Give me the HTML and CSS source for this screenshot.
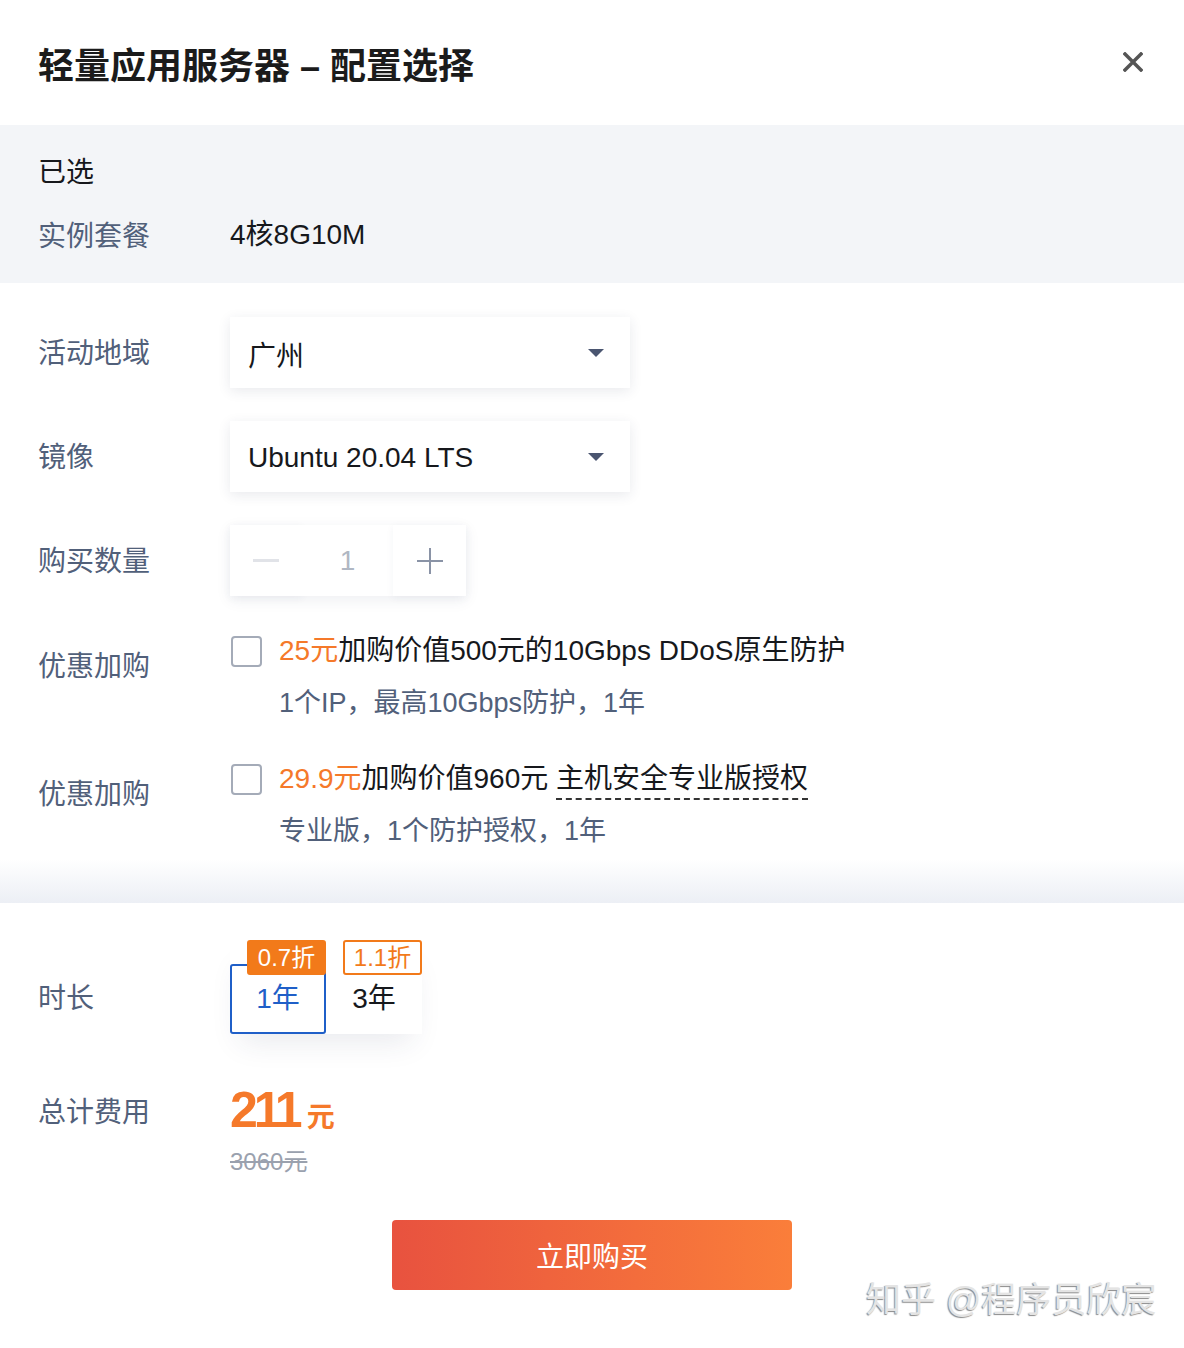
FILE: index.html
```html
<!DOCTYPE html>
<html lang="zh-CN">
<head>
    <meta charset="utf-8">
    <title>轻量应用服务器 - 配置选择</title>
    <meta name="viewport" content="width=device-width, initial-scale=1">
    <link rel="stylesheet" href="styles.css">
</head>
<body>

<div class="dialog">
    <div class="head">
        <h2 class="title">轻量应用服务器 – 配置选择</h2>
        <span class="close">
            <svg width="20" height="20" viewBox="0 0 20 20"><path d="M2 2 L18 18 M18 2 L2 18" stroke="#555" stroke-width="3.5" stroke-linecap="square"/></svg>
        </span>
    </div>

    <!-- 已选 -->
    <div class="picked">
        <div class="picked-title">已选</div>
        <div class="picked-row">
            <span class="label">实例套餐</span>
            <span class="value">4核8G10M</span>
        </div>
    </div>

    <div class="form">
        <div class="field">
            <div class="label">活动地域</div>
            <div class="select"><span>广州</span><i class="caret"></i></div>
        </div>
        <div class="field">
            <div class="label">镜像</div>
            <div class="select"><span>Ubuntu 20.04 LTS</span><i class="caret"></i></div>
        </div>
        <div class="field">
            <div class="label">购买数量</div>
            <div class="stepper">
                <div class="step minus"><i class="bar"></i></div>
                <div class="step num">1</div>
                <div class="step plus"><i class="bar"></i><i class="bar v"></i></div>
            </div>
        </div>
        <div class="field addon">
            <div class="label">优惠加购</div>
            <div class="addon-body">
                <div class="addon-main">
                    <span class="checkbox"></span>
                    <span><em class="price">25元</em>加购价值500元的10Gbps DDoS原生防护</span>
                </div>
                <div class="addon-sub">1个IP，最高10Gbps防护，1年</div>
            </div>
        </div>
        <div class="field addon">
            <div class="label">优惠加购</div>
            <div class="addon-body">
                <div class="addon-main">
                    <span class="checkbox"></span>
                    <span><em class="price">29.9元</em>加购价值960元 <span class="dashed">主机安全专业版授权</span></span>
                </div>
                <div class="addon-sub">专业版，1个防护授权，1年</div>
            </div>
        </div>
    </div>

    <div class="fade"></div>

    <div class="bottom">
        <div class="field duration">
            <div class="label">时长</div>
            <div class="options">
                <div class="option active">
                    <span class="badge fill">0.7折</span>
                    <div class="option-box">1年</div>
                </div>
                <div class="option">
                    <span class="badge line">1.1折</span>
                    <div class="option-box">3年</div>
                </div>
            </div>
        </div>
        <div class="field total">
            <div class="label">总计费用</div>
            <div class="cost">
                <div class="cost-now"><b>211</b><span>元</span></div>
                <div class="cost-old">3060元</div>
            </div>
        </div>
        <div class="buy-wrap">
            <button class="buy">立即购买</button>
        </div>
    </div>

    <div class="watermark">知乎 @程序员欣宸</div>
</div>

</body>
</html>
```

FILE: styles.css
```css
* {
    margin: 0;
    padding: 0;
    box-sizing: border-box;
}

body {
    font-family: "Liberation Sans", "Noto Sans CJK SC", sans-serif;
    font-size: 28px;
    color: #16181c;
    background: #fff;
}

.dialog {
    position: relative;
    width: 1184px;
    height: 1348px;
    background: #fff;
}

.head {
    height: 125px;
    padding: 45px 38px 0 38px;
    display: flex;
    justify-content: space-between;
    align-items: flex-start;
}

.title {
    font-size: 36px;
    line-height: 44px;
    font-weight: bold;
    color: #1b1b1b;
}

.close {
    margin: 2px 3px 0 0;
}

.label {
    width: 192px;
    flex-shrink: 0;
    color: #51607a;
    line-height: 40px;
    padding-top: 2px;
}

/* 已选 */
.picked {
    height: 158px;
    background: #f3f5f8;
    padding: 26px 38px 0 38px;
}

.picked-title {
    line-height: 40px;
    padding-top: 2px;
    color: #16181c;
}

.picked-row {
    display: flex;
    margin-top: 22px;
    line-height: 40px;
}

/* 表单 */
.form {
    padding: 34px 38px 0 38px;
}

.field {
    display: flex;
    align-items: center;
    margin-bottom: 33px;
}

.select {
    width: 400px;
    height: 71px;
    padding: 0 26px 0 18px;
    display: flex;
    align-items: center;
    justify-content: space-between;
    background: #fff;
    box-shadow: 0 3px 12px rgba(40, 50, 80, 0.10);
}

.select span {
    padding-top: 3px;
}

.caret {
    width: 0;
    height: 0;
    border-left: 8px solid transparent;
    border-right: 8px solid transparent;
    border-top: 8px solid #4a5570;
}

.stepper {
    display: flex;
    height: 71px;
    box-shadow: 0 4px 14px rgba(40, 50, 90, 0.08);
}

.step {
    position: relative;
    display: flex;
    align-items: center;
    justify-content: center;
    background: #fff;
}

.minus {
    width: 72px;
    box-shadow: 0 2px 8px rgba(40, 50, 90, 0.05);
}

.num {
    width: 91px;
    color: #b0b7c3;
}

.plus {
    width: 73px;
    box-shadow: 0 2px 8px rgba(40, 50, 90, 0.05);
}

.bar {
    position: absolute;
    width: 26px;
    height: 3px;
    background: #e1e3e8;
}

.plus .bar {
    background: #8a93a6;
    height: 2px;
}

.plus .bar.v {
    width: 2px;
    height: 26px;
}

/* 优惠加购 */
.addon {
    align-items: flex-start;
    margin-bottom: 32px;
}

.addon .label {
    padding-top: 16px;
    line-height: 44px;
}

.addon-main {
    display: flex;
    align-items: center;
    line-height: 44px;
}

.checkbox {
    width: 31px;
    height: 31px;
    margin: 0 17px 0 1px;
    border: 2px solid #a4abb8;
    border-radius: 4px;
    flex-shrink: 0;
}

.price {
    font-style: normal;
    color: #f5792a;
}

.dashed {
    border-bottom: 2px dashed #333;
    line-height: 38px;
    display: inline-block;
}

.addon-sub {
    margin-top: 8px;
    padding-left: 49px;
    line-height: 44px;
    font-size: 27px;
    color: #51607a;
}

.fade {
    height: 44px;
    margin-top: -26px;
    background: linear-gradient(to bottom, #ffffff, #eceff5);
}

/* 时长 / 费用 */
.bottom {
    padding: 37px 38px 0 38px;
}

.duration {
    align-items: flex-end;
    margin-bottom: 0;
}

.duration .label {
    line-height: 70px;
}

.options {
    display: flex;
    box-shadow: 0 18px 30px -10px rgba(40, 50, 90, 0.10);
}

.option {
    position: relative;
    width: 96px;
    padding-top: 24px;
}

.option-box {
    height: 70px;
    line-height: 66px;
    text-align: center;
    background: #fff;
    border: 2px solid transparent;
    color: #16181c;
}

.option.active .option-box {
    border-color: #1f5fc8;
    border-radius: 3px;
    color: #1f5fc8;
}

.badge {
    position: absolute;
    top: 0;
    right: 0;
    width: 79px;
    height: 35px;
    line-height: 31px;
    font-size: 24px;
    text-align: center;
    border: 2px solid #f27a1a;
    border-radius: 3px;
    z-index: 1;
}

.badge.fill {
    background: #f27a1a;
    color: #fff;
}

.badge.line {
    background: #fff;
    color: #f27a1a;
}

.total {
    align-items: flex-start;
    margin: 48px 0 0 0;
}

.total .label {
    padding-top: 11px;
}

.cost-now {
    height: 56px;
    line-height: 56px;
    color: #f5792a;
}

.cost-now b {
    font-size: 50px;
    letter-spacing: -4px;
}

.cost-now span {
    margin-left: 8px;
    font-size: 28px;
    font-weight: bold;
}

.cost-old {
    margin-top: 9px;
    font-size: 24px;
    line-height: 30px;
    color: #9aa1ae;
    text-decoration: line-through;
}

.buy-wrap {
    display: flex;
    justify-content: center;
    margin-top: 43px;
}

.buy {
    width: 400px;
    height: 70px;
    border: none;
    border-radius: 4px;
    font-family: inherit;
    font-size: 28px;
    color: #fff;
    background: linear-gradient(to right, #e8523f, #fa7e3a);
}

.watermark {
    position: absolute;
    left: 866px;
    top: 1278px;
    font-size: 35px;
    line-height: 44px;
    color: #e4e4e4;
    text-shadow: -1px 1px 1px #8a8a8a;
}
```
